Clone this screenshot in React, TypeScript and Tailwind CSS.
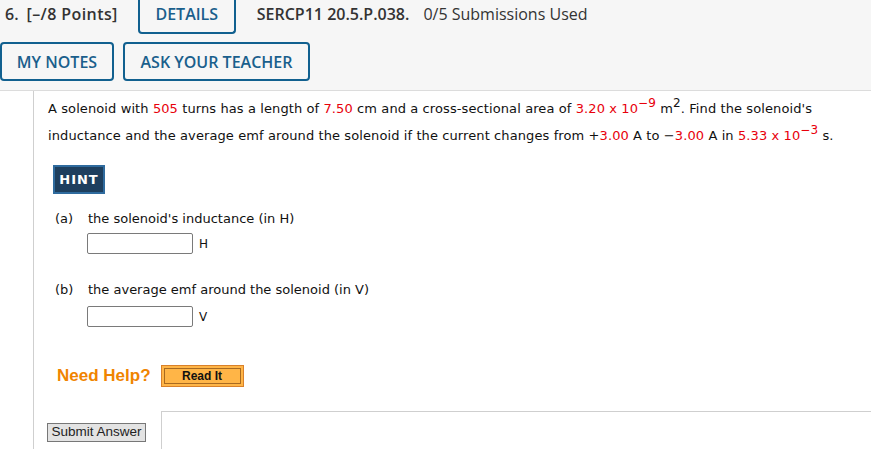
import React from "react";

const R = ({ children }: { children: React.ReactNode }) => (
  <span className="text-[#e8000b]">{children}</span>
);

export default function App() {
  return (
    <div className="w-[871px] h-[449px] overflow-hidden bg-white relative">
      {/* header */}
      <div className="h-[91px] bg-[#f6f6f6] border-b border-[#dcdcdc] font-['Open_Sans',sans-serif] text-[16px] text-[#333]">
        <div className="flex items-start h-[42px]">
          <div className="pl-[5px] pt-[3px] font-semibold leading-[22px] flex">
            <span>6.</span>
            <span className="ml-[8px] tracking-[0.4px]">[–/8 Points]</span>
          </div>
          <div className="ml-[20px] w-[98px] h-[34px] border-2 border-t-0 border-[#11608f] rounded-b-[4px] flex items-center justify-center text-[#1a5f8c] font-semibold pb-[4px]">
            DETAILS
          </div>
          <div className="ml-[21px] pt-[3px] leading-[22px] flex">
            <span className="font-semibold">SERCP11 20.5.P.038.</span>
            <span className="ml-[14px] font-normal">0/5 Submissions Used</span>
          </div>
        </div>
        <div className="flex gap-[9px]">
          <div className="w-[114px] h-[39px] border-2 border-[#11608f] rounded-[4px] flex items-center justify-center text-[#1a5f8c] font-semibold">
            MY NOTES
          </div>
          <div className="w-[187px] h-[39px] border-2 border-[#11608f] rounded-[4px] flex items-center justify-center text-[#1a5f8c] font-semibold">
            ASK YOUR TEACHER
          </div>
        </div>
      </div>
      {/* body */}
      <div className="flex h-[358px]">
        <div className="w-[34px] border-r border-[#cfcfcf] shrink-0" />
        <div className="flex-1 pl-[14px] font-['DejaVu_Sans',Verdana,sans-serif] text-[13px] text-[#111]">
          <p className="mt-[4px] leading-[27px] pr-[20px] tracking-[0.1px]">
            A solenoid with <R>505</R> turns has a length of <R>7.50</R> cm and a cross-sectional area of{" "}
            <R>3.20 x 10</R>
            <sup className="text-[#e8000b] text-[12px] relative -top-[6px]">−9</sup> m<sup className="text-[12px] relative -top-[6px]">2</sup>. Find the solenoid's inductance and the average emf around the solenoid if the current changes from +<R>3.00</R> A to −<R>3.00</R> A in <R>5.33 x 10</R>
            <sup className="text-[#e8000b] text-[12px] relative -top-[6px]">−3</sup> s.
          </p>
          <div className="mt-[16px] ml-[5px] w-[52px] h-[29px] bg-[#1e3f5e] border-2 border-[#2f6b9e] flex items-center justify-center text-white font-bold text-[13px] tracking-[1px]">
            HINT
          </div>
          <div className="mt-[16px] ml-[7px] flex items-center leading-[18px]">
            <span className="w-[33px]">(a)</span>
            <span>the solenoid's inductance (in H)</span>
          </div>
          <div className="mt-[5px] ml-[39px] flex items-center">
            <div className="w-[106px] h-[21px] border border-[#7a7a7a] rounded-[2px] bg-white" />
            <span className="ml-[6px] text-[12px]">H</span>
          </div>
          <div className="mt-[27px] ml-[7px] flex items-center leading-[18px]">
            <span className="w-[33px]">(b)</span>
            <span>the average emf around the solenoid (in V)</span>
          </div>
          <div className="mt-[7px] ml-[39px] flex items-center">
            <div className="w-[106px] h-[21px] border border-[#7a7a7a] rounded-[2px] bg-white" />
            <span className="ml-[6px] text-[12px]">V</span>
          </div>
          <div className="mt-[36px] ml-[9px] flex items-center font-['Liberation_Sans',Arial,sans-serif]">
            <span className="text-[#f08400] font-bold text-[17px]">Need Help?</span>
            <div className="ml-[10px] w-[83px] h-[22px] border border-[#d9812a] bg-[#ffb547] p-[2px]">
              <div className="w-full h-full border border-[#a86a20] flex items-center justify-center text-[12px] font-bold text-[#111] leading-none">
                Read It
              </div>
            </div>
          </div>
          <div className="mt-[22px] flex items-start">
            <div className="mt-[12px] -ml-[1px] w-[99px] h-[19px] bg-[#e3e3e3] border border-[#777] flex items-center justify-center font-['Liberation_Sans',Arial,sans-serif] text-[13.5px] leading-none text-[#222]">
              Submit Answer
            </div>
            <div className="ml-[15px] flex-1 h-[60px] border-t border-l border-[#cfcfcf]" />
          </div>
        </div>
      </div>
    </div>
  );
}
